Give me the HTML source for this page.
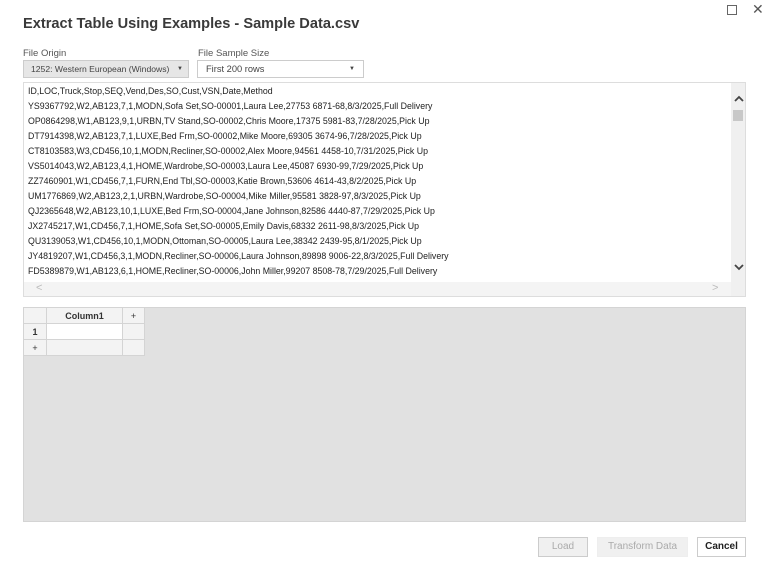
<!DOCTYPE html>
<html><head><style>
body{margin:0;width:768px;height:576px;background:#fff;font-family:"Liberation Sans",sans-serif;position:relative;overflow:hidden;color:#333}
.a{position:absolute}
h1{position:absolute;left:23px;top:16px;margin:0;font-size:14.6px;font-weight:bold;color:#3a3a3a;white-space:nowrap}
.lbl{font-size:9.5px;color:#555}
.sel{border:1px solid #ccc;height:18px;font-size:9.3px;line-height:17px;padding-left:8px;box-sizing:border-box;color:#444;white-space:nowrap;overflow:hidden}
.txt{left:23px;top:82px;width:723px;height:215px;border:1px solid #ddd;box-sizing:border-box;overflow:hidden}
.line{position:absolute;left:4px;font-size:8.8px;white-space:nowrap;color:#222}
.grid{left:23px;top:307px;width:723px;height:215px;background:#e1e1e1;border:1px solid #d4d4d4;box-sizing:border-box}
table{border-collapse:collapse;position:absolute;left:-1px;top:-1px;font-size:9px}
td{border:1px solid #d4d4d4;height:15px;padding:0;background:#f3f3f3;text-align:center;color:#333}
.btn{border:1px solid #ccc;font-size:10px;text-align:center;line-height:18px;height:20px;box-sizing:border-box}
</style></head><body>
<h1>Extract Table Using Examples - Sample Data.csv</h1>
<div class="a" style="left:727px;top:5px;width:8px;height:8px;border:1px solid #666"></div>
<div class="a" style="left:752px;top:1px;font-size:14px;color:#555">✕</div>
<div class="a lbl" style="left:23px;top:48px">File Origin</div>
<div class="a lbl" style="left:198px;top:48px">File Sample Size</div>
<div class="a sel" style="left:23px;top:60px;width:166px;background:#e6e6e6;font-size:8.6px;padding-left:7px">1252: Western European (Windows)<span style="position:absolute;right:5px;top:0;font-size:6px;background:#e6e6e6;padding-left:3px">▼</span></div>
<div class="a sel" style="left:197px;top:60px;width:167px;background:#fff">First 200 rows<span style="position:absolute;right:8px;top:0;font-size:6px">▼</span></div>
<div class="a txt">
<div class="line" style="top:3px">ID,LOC,Truck,Stop,SEQ,Vend,Des,SO,Cust,VSN,Date,Method</div>
<div class="line" style="top:18px">YS9367792,W2,AB123,7,1,MODN,Sofa Set,SO-00001,Laura Lee,27753 6871-68,8/3/2025,Full Delivery</div>
<div class="line" style="top:33px">OP0864298,W1,AB123,9,1,URBN,TV Stand,SO-00002,Chris Moore,17375 5981-83,7/28/2025,Pick Up</div>
<div class="line" style="top:48px">DT7914398,W2,AB123,7,1,LUXE,Bed Frm,SO-00002,Mike Moore,69305 3674-96,7/28/2025,Pick Up</div>
<div class="line" style="top:63px">CT8103583,W3,CD456,10,1,MODN,Recliner,SO-00002,Alex Moore,94561 4458-10,7/31/2025,Pick Up</div>
<div class="line" style="top:78px">VS5014043,W2,AB123,4,1,HOME,Wardrobe,SO-00003,Laura Lee,45087 6930-99,7/29/2025,Pick Up</div>
<div class="line" style="top:93px">ZZ7460901,W1,CD456,7,1,FURN,End Tbl,SO-00003,Katie Brown,53606 4614-43,8/2/2025,Pick Up</div>
<div class="line" style="top:108px">UM1776869,W2,AB123,2,1,URBN,Wardrobe,SO-00004,Mike Miller,95581 3828-97,8/3/2025,Pick Up</div>
<div class="line" style="top:123px">QJ2365648,W2,AB123,10,1,LUXE,Bed Frm,SO-00004,Jane Johnson,82586 4440-87,7/29/2025,Pick Up</div>
<div class="line" style="top:138px">JX2745217,W1,CD456,7,1,HOME,Sofa Set,SO-00005,Emily Davis,68332 2611-98,8/3/2025,Pick Up</div>
<div class="line" style="top:153px">QU3139053,W1,CD456,10,1,MODN,Ottoman,SO-00005,Laura Lee,38342 2439-95,8/1/2025,Pick Up</div>
<div class="line" style="top:168px">JY4819207,W1,CD456,3,1,MODN,Recliner,SO-00006,Laura Johnson,89898 9006-22,8/3/2025,Full Delivery</div>
<div class="line" style="top:183px">FD5389879,W1,AB123,6,1,HOME,Recliner,SO-00006,John Miller,99207 8508-78,7/29/2025,Full Delivery</div>
<div class="a" style="left:0;top:199px;width:708px;height:15px;background:#f4f4f4"></div>
<div class="a" style="left:12px;top:199px;font-size:11px;color:#bbb">&lt;</div>
<div class="a" style="left:688px;top:199px;font-size:11px;color:#bbb">&gt;</div>
<div class="a" style="left:707px;top:0;width:15px;height:214px;background:#f0f0f0"></div>
<div class="a" style="left:709px;top:27px;width:10px;height:11px;background:#c8c8c8"></div>
<svg class="a" style="left:709px;top:12px" width="12" height="8"><path d="M2 6L6 2L10 6" stroke="#444" stroke-width="1.8" fill="none"/></svg>
<svg class="a" style="left:709px;top:180px" width="12" height="8"><path d="M2 2L6 6L10 2" stroke="#444" stroke-width="1.8" fill="none"/></svg>
</div>
<div class="a grid">
<table>
<tr><td style="width:22px"></td><td style="width:75px;font-weight:bold">Column1</td><td style="width:21px">+</td></tr>
<tr><td style="font-weight:bold">1</td><td style="background:#fff"></td><td></td></tr>
<tr><td>+</td><td></td><td></td></tr>
</table>
</div>
<div class="a btn" style="left:538px;top:537px;width:50px;background:#f0f0f0;color:#aaa">Load</div>
<div class="a btn" style="left:597px;top:537px;width:91px;background:#f0f0f0;color:#aaa;border-color:#eee">Transform Data</div>
<div class="a btn" style="left:697px;top:537px;width:49px;background:#fff;color:#222;font-weight:bold">Cancel</div>
</body></html>
